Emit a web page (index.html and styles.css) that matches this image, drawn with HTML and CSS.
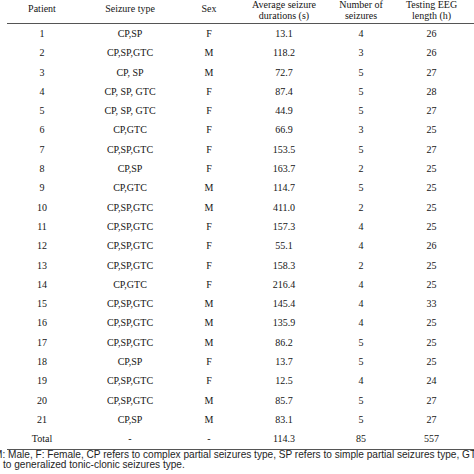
FILE: index.html
```html
<!DOCTYPE html>
<html>
<head>
<meta charset="utf-8">
<link rel="stylesheet" href="styles.css">
</head>
<body>
<div class="page">
<table class="data">
  <colgroup>
    <col class="c1"><col class="c2"><col class="c3"><col class="c4"><col class="c5"><col class="c6">
  </colgroup>
  <thead>
    <tr><th class="single">Patient</th><th class="single">Seizure type</th><th class="single">Sex</th><th>Average seizure<br>durations (s)</th><th>Number of<br>seizures</th><th>Testing EEG<br>length (h)</th></tr>
  </thead>
  <tbody>
    <tr><td>1</td><td>CP,SP</td><td>F</td><td>13.1</td><td>4</td><td>26</td></tr>
    <tr><td>2</td><td>CP,SP,GTC</td><td>M</td><td>118.2</td><td>3</td><td>26</td></tr>
    <tr><td>3</td><td>CP, SP</td><td>M</td><td>72.7</td><td>5</td><td>27</td></tr>
    <tr><td>4</td><td>CP, SP, GTC</td><td>F</td><td>87.4</td><td>5</td><td>28</td></tr>
    <tr><td>5</td><td>CP, SP, GTC</td><td>F</td><td>44.9</td><td>5</td><td>27</td></tr>
    <tr><td>6</td><td>CP,GTC</td><td>F</td><td>66.9</td><td>3</td><td>25</td></tr>
    <tr><td>7</td><td>CP,SP,GTC</td><td>F</td><td>153.5</td><td>5</td><td>27</td></tr>
    <tr><td>8</td><td>CP,SP</td><td>F</td><td>163.7</td><td>2</td><td>25</td></tr>
    <tr><td>9</td><td>CP,GTC</td><td>M</td><td>114.7</td><td>5</td><td>25</td></tr>
    <tr><td>10</td><td>CP,SP,GTC</td><td>M</td><td>411.0</td><td>2</td><td>25</td></tr>
    <tr><td>11</td><td>CP,SP,GTC</td><td>F</td><td>157.3</td><td>4</td><td>25</td></tr>
    <tr><td>12</td><td>CP,SP,GTC</td><td>F</td><td>55.1</td><td>4</td><td>26</td></tr>
    <tr><td>13</td><td>CP,SP,GTC</td><td>F</td><td>158.3</td><td>2</td><td>25</td></tr>
    <tr><td>14</td><td>CP,GTC</td><td>F</td><td>216.4</td><td>4</td><td>25</td></tr>
    <tr><td>15</td><td>CP,SP,GTC</td><td>M</td><td>145.4</td><td>4</td><td>33</td></tr>
    <tr><td>16</td><td>CP,SP,GTC</td><td>M</td><td>135.9</td><td>4</td><td>25</td></tr>
    <tr><td>17</td><td>CP,SP,GTC</td><td>M</td><td>86.2</td><td>5</td><td>25</td></tr>
    <tr><td>18</td><td>CP,SP</td><td>F</td><td>13.7</td><td>5</td><td>25</td></tr>
    <tr><td>19</td><td>CP,SP,GTC</td><td>F</td><td>12.5</td><td>4</td><td>24</td></tr>
    <tr><td>20</td><td>CP,SP,GTC</td><td>M</td><td>85.7</td><td>5</td><td>27</td></tr>
    <tr><td>21</td><td>CP,SP</td><td>M</td><td>83.1</td><td>5</td><td>27</td></tr>
  </tbody>
  <tfoot>
    <tr><td>Total</td><td>-</td><td>-</td><td>114.3</td><td>85</td><td>557</td></tr>
  </tfoot>
</table>
<div class="note">
  <div class="note-line first">M: Male, F: Female, CP refers to complex partial seizures type, SP refers to simple partial seizures type, GTC refers</div>
  <div class="note-line second">to generalized tonic-clonic seizures type.</div>
</div>
</div>
</body>
</html>
```
FILE: styles.css
```css
html, body {
  margin: 0;
  padding: 0;
  background: #ffffff;
}
body {
  width: 474px;
  height: 474px;
  overflow: hidden;
}
.page {
  width: 474px;
  overflow: hidden;
}
.data {
  margin: -1px 0 0 7px;
  width: 467px;
  border-collapse: collapse;
  table-layout: fixed;
  font-family: "Liberation Serif", "Times New Roman", serif;
  font-size: 10px;
  color: #151515;
}
.c1 { width: 70px; }
.c2 { width: 106px; }
.c3 { width: 52px; }
.c4 { width: 98px; }
.c5 { width: 56px; }
.c6 { width: 85px; }
.data th {
  font-weight: normal;
  line-height: 11px;
  padding: 0 0 2px 0;
  text-align: center;
  vertical-align: middle;
  border-bottom: 1.5px solid #555;
}
.data th.single {
  padding-bottom: 6px;
}
.data td {
  height: 19.3px;
  line-height: 19.3px;
  padding: 0;
  text-align: center;
  vertical-align: middle;
  white-space: nowrap;
}
.data tfoot td {
  border-bottom: 1.5px solid #555;
}
.note {
  font-family: "Liberation Sans", Arial, sans-serif;
  font-size: 10.1px;
  line-height: 10.5px;
  color: #1e1e1e;
  white-space: nowrap;
}
.note-line.first {
  margin-left: -6px;
}
.note-line.second {
  margin-left: 3px;
}
```
